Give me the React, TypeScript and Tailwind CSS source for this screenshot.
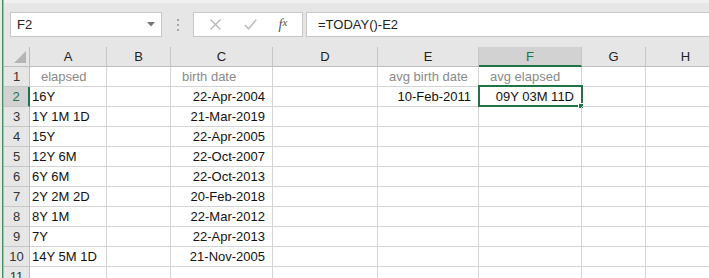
import React from 'react'

type Col = { key: string; w: string }

const cols: Col[] = [
  { key: 'A', w: 'w-[77px]' },
  { key: 'B', w: 'w-[64px]' },
  { key: 'C', w: 'w-[102px]' },
  { key: 'D', w: 'w-[105px]' },
  { key: 'E', w: 'w-[101px]' },
  { key: 'F', w: 'w-[103px]' },
  { key: 'G', w: 'w-[64px]' },
  { key: 'H', w: 'w-[80px]' },
]

const data: [string, string][] = [
  ['16Y', '22-Apr-2004'],
  ['1Y 1M 1D', '21-Mar-2019'],
  ['15Y', '22-Apr-2005'],
  ['12Y 6M', '22-Oct-2007'],
  ['6Y 6M', '22-Oct-2013'],
  ['2Y 2M 2D', '20-Feb-2018'],
  ['8Y 1M', '22-Mar-2012'],
  ['7Y', '22-Apr-2013'],
  ['14Y 5M 1D', '21-Nov-2005'],
]

type CellVal = { text: string; kind: 'label' | 'left' | 'right' }

const buildRows = (): Record<string, CellVal>[] => {
  const rows: Record<string, CellVal>[] = []
  rows.push({
    A: { text: 'elapsed', kind: 'label' },
    C: { text: 'birth date', kind: 'label' },
    E: { text: 'avg birth date', kind: 'label' },
    F: { text: 'avg elapsed', kind: 'label' },
  })
  data.forEach(([a, c], i) => {
    const r: Record<string, CellVal> = {
      A: { text: a, kind: 'left' },
      C: { text: c, kind: 'right' },
    }
    if (i === 0) {
      r.E = { text: '10-Feb-2011', kind: 'right' }
      r.F = { text: '09Y 03M 11D', kind: 'right' }
    }
    rows.push(r)
  })
  rows.push({})
  return rows
}

const Cell = ({ col, val, selected }: { col: Col; val?: CellVal; selected?: boolean }) => {
  let cls = 'pl-[2px] text-[#111]'
  if (val?.kind === 'label') cls = 'pl-[11px] text-[#8a8a8a]'
  if (val?.kind === 'right') cls = 'justify-end pr-[7px] text-[#111]'
  return (
    <div
      className={`relative flex h-[20px] shrink-0 items-center whitespace-nowrap border-b border-r border-[#d4d4d4] text-[13px] ${col.w} ${cls}`}
    >
      {val?.text}
      {selected && (
        <>
          <div className="pointer-events-none absolute -left-[1px] -top-[2px] h-[22px] w-[105px] border-2 border-[#217346]" />
          <div className="absolute -bottom-[3px] -right-[3px] h-[6px] w-[6px] border border-white bg-[#217346]" />
        </>
      )}
    </div>
  )
}

export default function App() {
  const rows = buildRows()
  return (
    <div
      className="flex h-[278px] w-[709px] overflow-hidden bg-white"
      style={{ fontFamily: '"Liberation Sans", Arial, sans-serif' }}
    >
      {/* sliver of the window behind */}
      <div className="flex h-full w-[4px] shrink-0 bg-[#e6e6e6]">
        <div className="w-[2px] bg-[#eaeaea]" />
        <div className="w-[1px] bg-[#3f8f5e]" />
        <div className="w-[1px] bg-[#b8b8b8]" />
      </div>

      <div className="flex min-w-0 flex-1 flex-col">
        {/* formula bar */}
        <div className="flex h-[47px] shrink-0 items-center border-t-[3px] border-[#f0f0f0] bg-[#e6e6e6] pb-[1px] pl-[6px]">
          <div className="flex h-[25px] w-[152px] items-center justify-between border border-[#c6c6c6] bg-white pl-[6px] pr-[6px] text-[13px] text-[#222]">
            <span>F2</span>
            <svg width="8" height="5" viewBox="0 0 8 5">
              <path d="M0 0 L8 0 L4 4.5 Z" fill="#777" />
            </svg>
          </div>
          <div className="flex w-[31px] flex-col items-center gap-[3px]">
            <div className="h-[2px] w-[2px] bg-[#a8a8a8]" />
            <div className="h-[2px] w-[2px] bg-[#a8a8a8]" />
            <div className="h-[2px] w-[2px] bg-[#a8a8a8]" />
          </div>
          <div className="flex h-[25px] w-[110px] items-center border border-[#c6c6c6] bg-white">
            <div className="flex w-[38px] justify-center pl-[4px]">
              <svg width="11" height="11" viewBox="0 0 11 11">
                <path d="M0.5 0.5 L10.5 10.5 M10.5 0.5 L0.5 10.5" stroke="#b3b3b3" strokeWidth="1.2" />
              </svg>
            </div>
            <div className="flex w-[36px] justify-center">
              <svg width="13" height="11" viewBox="0 0 13 11">
                <path d="M0.8 6 L4.5 9.8 L12.2 0.8" stroke="#bdbdbd" strokeWidth="1.6" fill="none" />
              </svg>
            </div>
            <div
              className="flex w-[30px] justify-center text-[14px] italic text-[#555]"
              style={{ fontFamily: '"Liberation Serif", serif' }}
            >
              f<span className="text-[11px]">x</span>
            </div>
          </div>
          <div className="ml-[3px] flex h-[25px] flex-1 items-center border-y border-l border-[#c6c6c6] bg-white pl-[11px] text-[13px] text-[#222]">
            =TODAY()-E2
          </div>
        </div>

        {/* column headers */}
        <div className="flex h-[20px] shrink-0 bg-[#e6e6e6]">
          <div className="relative h-full w-[26px] shrink-0 border-b border-r border-[#bdbdbd]">
            <svg className="absolute bottom-[3px] right-[3px]" width="12" height="12" viewBox="0 0 12 12">
              <path d="M12 0 L12 12 L0 12 Z" fill="#b5b5b5" />
            </svg>
          </div>
          {cols.map((c) =>
            c.key === 'F' ? (
              <div
                key={c.key}
                className={`flex h-full shrink-0 items-center justify-center border-b-2 border-r border-b-[#217346] border-r-[#c6c6c6] bg-[#d2d2d2] pt-[1px] text-[13px] text-[#217346] ${c.w}`}
              >
                {c.key}
              </div>
            ) : (
              <div
                key={c.key}
                className={`flex h-full shrink-0 items-center justify-center border-b border-r border-b-[#bdbdbd] border-r-[#c6c6c6] text-[13px] text-[#222] ${c.w}`}
              >
                {c.key}
              </div>
            ),
          )}
        </div>

        {/* rows */}
        {rows.map((r, i) => {
          const n = i + 1
          const active = n === 2
          return (
            <div key={n} className="flex shrink-0">
              <div
                className={`flex h-[20px] w-[26px] shrink-0 items-center justify-center border-b text-[13px] ${
                  active
                    ? 'border-r-2 border-b-[#c6c6c6] border-r-[#217346] bg-[#d2d2d2] text-[#217346]'
                    : 'border-r border-b-[#c6c6c6] border-r-[#bdbdbd] bg-[#e6e6e6] text-[#333]'
                }`}
              >
                {n}
              </div>
              {cols.map((c) => (
                <Cell key={c.key} col={c} val={r[c.key]} selected={active && c.key === 'F'} />
              ))}
            </div>
          )
        })}
      </div>
    </div>
  )
}
